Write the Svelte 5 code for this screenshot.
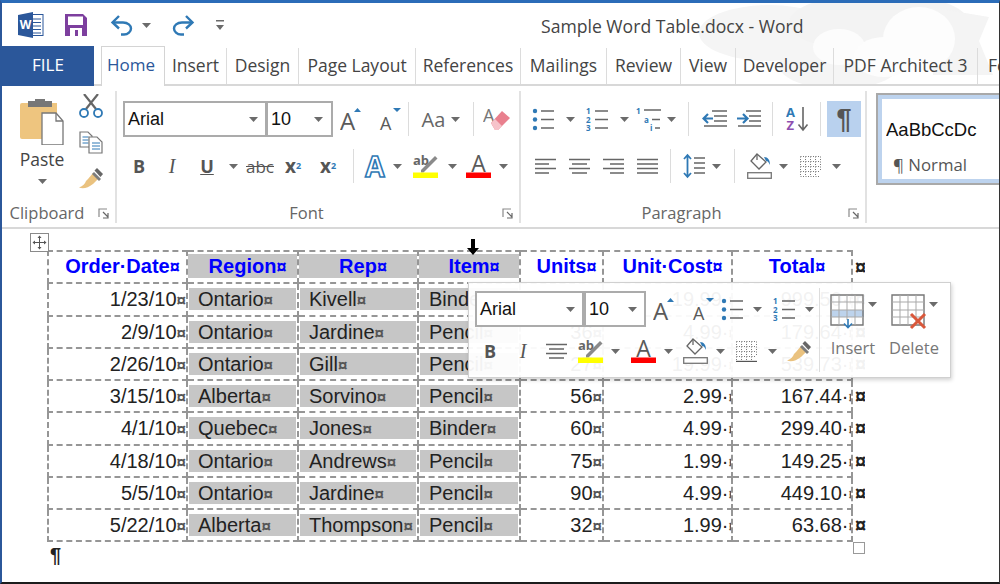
<script>
	const tabs = [
		{ name: 'Home', w: 64, active: true },
		{ name: 'Insert', w: 62 },
		{ name: 'Design', w: 72 },
		{ name: 'Page Layout', w: 117 },
		{ name: 'References', w: 105 },
		{ name: 'Mailings', w: 86 },
		{ name: 'Review', w: 74 },
		{ name: 'View', w: 55 },
		{ name: 'Developer', w: 98 },
		{ name: 'PDF Architect 3', w: 144 },
		{ name: 'Fe', w: 40 }
	];

	const headers = ['Order·Date', 'Region', 'Rep', 'Item', 'Units', 'Unit·Cost', 'Total'];

	const rows = [
		['1/23/10', 'Ontario', 'Kivell', 'Binder', '50', '19.99', '999.50'],
		['2/9/10', 'Ontario', 'Jardine', 'Pencil', '36', '4.99', '179.64'],
		['2/26/10', 'Ontario', 'Gill', 'Pencil', '27', '19.99', '539.73'],
		['3/15/10', 'Alberta', 'Sorvino', 'Pencil', '56', '2.99', '167.44'],
		['4/1/10', 'Quebec', 'Jones', 'Binder', '60', '4.99', '299.40'],
		['4/18/10', 'Ontario', 'Andrews', 'Pencil', '75', '1.99', '149.25'],
		['5/5/10', 'Ontario', 'Jardine', 'Pencil', '90', '4.99', '449.10'],
		['5/22/10', 'Alberta', 'Thompson', 'Pencil', '32', '1.99', '63.68']
	];
</script>

{#snippet caret()}
	<svg width="9" height="5" viewBox="0 0 9 5"><path d="M0 0h9L4.5 5z" fill="#6b6b6b" /></svg>
{/snippet}

{#snippet launcher()}
	<svg width="12" height="11" viewBox="0 0 12 11" fill="none">
		<path d="M1 9V1h8" stroke="#8a8a8a" stroke-width="1.2" />
		<path d="M5 4l5 5M10 5v5H5" stroke="#666" stroke-width="1.2" />
	</svg>
{/snippet}

{#snippet growA()}
	<svg width="24" height="26" viewBox="0 0 24 26">
		<text x="0" y="24" class="svgt" font-size="24" fill="#5a5a5a">A</text>
		<path d="M14 6l3.5-4 3.500 4z" fill="#2f79b5" />
	</svg>
{/snippet}

{#snippet shrinkA()}
	<svg width="24" height="26" viewBox="0 0 24 26">
		<text x="2" y="24" class="svgt" font-size="18" fill="#5a5a5a">A</text>
		<path d="M15 2h8l-4 4z" fill="#2f79b5" />
	</svg>
{/snippet}

{#snippet bullets()}
	<svg width="23" height="23" viewBox="0 0 23 23" fill="none">
		<circle cx="3" cy="3" r="2.200" fill="#2f79b5" />
		<circle cx="3" cy="11.500" r="2.200" fill="#2f79b5" />
		<circle cx="3" cy="20" r="2.200" fill="#2f79b5" />
		<path d="M9 3h13M9 11.500h13M9 20h13" stroke="#666" stroke-width="1.600" />
	</svg>
{/snippet}

{#snippet numbering()}
	<svg width="23" height="25" viewBox="0 0 23 25" fill="none">
		<text x="0" y="7" class="svgt" font-size="8" font-weight="700" fill="#2f79b5">1</text>
		<text x="0" y="15.500" class="svgt" font-size="8" font-weight="700" fill="#2f79b5">2</text>
		<text x="0" y="24" class="svgt" font-size="8" font-weight="700" fill="#2f79b5">3</text>
		<path d="M9 4h13M9 12.500h13M9 21h13" stroke="#666" stroke-width="1.600" />
	</svg>
{/snippet}

{#snippet multilevel()}
	<svg width="27" height="25" viewBox="0 0 27 25" fill="none">
		<text x="0" y="7" class="svgt" font-size="8" font-weight="700" fill="#2f79b5">1</text>
		<text x="8" y="15.500" class="svgt" font-size="8" font-weight="700" fill="#2f79b5">a</text>
		<text x="14" y="24" class="svgt" font-size="8" font-weight="700" fill="#2f79b5">i</text>
		<path d="M8 3h17M16 12.500h8M19 21h5" stroke="#666" stroke-width="1.600" />
	</svg>
{/snippet}

{#snippet outdent()}
	<svg width="26" height="20" viewBox="0 0 26 20" fill="none">
		<path d="M10 2h15M12 7h13M12 12h13M2 17h23" stroke="#666" stroke-width="1.600" />
		<path d="M11 9.500H2M6 5L1.500 9.500 6 14" stroke="#2f79b5" stroke-width="2.200" />
	</svg>
{/snippet}

{#snippet indent()}
	<svg width="26" height="20" viewBox="0 0 26 20" fill="none">
		<path d="M10 2h15M13 7h12M13 12h12M2 17h23" stroke="#666" stroke-width="1.600" />
		<path d="M1 9.500h10M7 5l4.500 4.500L7 14" stroke="#2f79b5" stroke-width="2.200" />
	</svg>
{/snippet}

{#snippet sort()}
	<svg width="23" height="26" viewBox="0 0 23 26" fill="none">
		<text x="0" y="11" class="svgt" font-size="13" font-weight="700" fill="#2f79b5">A</text>
		<text x="0.500" y="24" class="svgt" font-size="13" font-weight="700" fill="#8e4fb0">Z</text>
		<path d="M17 1v22M12.500 18.500L17 24l4.500-5.500" stroke="#666" stroke-width="1.600" />
	</svg>
{/snippet}

{#snippet alignLines(kind)}
	<svg width="23" height="17" viewBox="0 0 23 17" fill="none">
		{#if kind === 'left'}
			<path d="M1 1.500h21M1 6h14M1 10.500h21M1 15h14" stroke="#666" stroke-width="1.600" />
		{:else if kind === 'center'}
			<path d="M1 1.500h21M4 6h15M1 10.500h21M4 15h15" stroke="#666" stroke-width="1.600" />
		{:else if kind === 'right'}
			<path d="M1 1.500h21M8 6h14M1 10.500h21M8 15h14" stroke="#666" stroke-width="1.600" />
		{:else}
			<path d="M1 1.500h21M1 6h21M1 10.500h21M1 15h21" stroke="#666" stroke-width="1.600" />
		{/if}
	</svg>
{/snippet}

{#snippet lineSpacing()}
	<svg width="23" height="26" viewBox="0 0 23 26" fill="none">
		<path d="M4.500 2v22M1 6l3.500-4L8 6M1 20l3.500 4L8 20" stroke="#2f79b5" stroke-width="1.800" />
		<path d="M11 5h11M11 10h11M11 15h11M11 20h11" stroke="#666" stroke-width="1.600" />
	</svg>
{/snippet}

{#snippet shading()}
	<svg width="25" height="26" viewBox="0 0 25 26" fill="none">
		<path d="M10 1l9 8-7 7-8-8z" fill="#fff" stroke="#666" stroke-width="1.300" />
		<path d="M10 1v6" stroke="#666" stroke-width="1.300" />
		<path d="M17 4c4 0 6 3 6 8-1-2-2-4-4-4z" fill="#2f79b5" />
		<rect x="0.700" y="19.700" width="23.600" height="5.600" fill="#fff" stroke="#777" stroke-width="1.300" />
	</svg>
{/snippet}

{#snippet borders(solid)}
	<svg width="21" height="21" viewBox="0 0 21 21" fill="none">
		<path d="M.5.5h20M.5 5.500h20M.5 10.500h20M.5 15.500h20M.5.5v20M5.500.5v20M10.500.5v20M15.500.5v20M20.500.5v15" stroke="#777" stroke-dasharray="1 1.500" />
		{#if solid}
			<path d="M0 20.500h21" stroke="#555" stroke-width="1.400" />
		{:else}
			<path d="M.5 20.500h20" stroke="#777" stroke-dasharray="1 1.500" />
		{/if}
	</svg>
{/snippet}

{#snippet painter()}
	<svg width="25" height="23" viewBox="0 0 25 23">
		<path d="M14 6l5 6-5 5C9 21 4 22 0 20.500 4 19 6 17 7 14l2-2z" fill="#eac27f" />
		<path d="M15.500 3.500l6 6.500 2.500-3-6-6z" fill="#666" />
		<path d="M13 7l7 7 2-2-7-7z" fill="#7d7d7d" />
	</svg>
{/snippet}

{#snippet highlight()}
	<svg width="25" height="24" viewBox="0 0 25 24" fill="none">
		<text x="0" y="11" class="svgt" font-size="13" font-weight="700" fill="#666">ab</text>
		<path d="M8 16L22 2l2.500 2.500-14 14H8z" fill="#8a8a8a" />
		<rect x="0" y="18.500" width="25" height="5.500" fill="#ffff00" />
	</svg>
{/snippet}

{#snippet fontColor()}
	<svg width="25" height="24" viewBox="0 0 25 24">
		<text x="12.500" y="18" class="svgt" text-anchor="middle" font-size="23" fill="#5a5a5a">A</text>
		<rect x="0" y="18.500" width="25" height="5.500" fill="#ff0000" />
	</svg>
{/snippet}

{#snippet tableIcon(kind)}
	<svg width="36" height="36" viewBox="0 0 36 36" fill="none">
		{#if kind === 'insert'}
			<rect x="2" y="16" width="32" height="7" fill="#bdd3ec" />
		{/if}
		<path d="M1 1h32v30H1z" stroke="#777" stroke-width="1.400" />
		<path d="M1 8h32M1 16h32M1 23h32M9 1v30M17 1v30M25 1v30" stroke="#a9a9a9" />
		{#if kind === 'insert'}
			<path d="M15 26h6v9h-6z" fill="#fff" />
			<path d="M18 25v8M14 29.500l4 4 4-4" stroke="#2f79b5" stroke-width="1.600" />
		{:else}
			<path d="M20 20l14 14M34 20L20 34" stroke="#d9583b" stroke-width="3" />
		{/if}
	</svg>
{/snippet}

<div class="window">
	<!-- title bar backdrop, the faint clouds on the right -->
	<svg class="clouds" width="320" height="82" viewBox="0 0 320 82">
		<ellipse cx="90" cy="30" rx="70" ry="28" fill="#f5f5f5" />
		<ellipse cx="200" cy="20" rx="90" ry="30" fill="#f3f3f3" />
		<ellipse cx="160" cy="62" rx="60" ry="24" fill="#f5f5f5" />
		<path d="M250 4l60 10-10 24 14 34h-60z" fill="#f4f4f4" />
		<ellipse cx="160" cy="44" rx="26" ry="18" fill="#fcfcfc" />
		<ellipse cx="240" cy="36" rx="36" ry="32" fill="#fdfdfd" />
		<ellipse cx="205" cy="54" rx="30" ry="20" fill="#fdfdfd" />
	</svg>

	<header class="titlebar">
		<div class="qat">
			<svg class="word" width="26" height="26" viewBox="0 0 26 26">
				<rect x="10" y="2.500" width="15" height="21" fill="#fff" stroke="#2b579a" />
				<path d="M15 7h8M15 10.500h8M15 14h8M15 17.500h8M15 21h8" stroke="#2b579a" stroke-width="1.200" />
				<path d="M0 3l15-3v26L0 23z" fill="#2b579a" />
				<text x="7.500" y="17" class="svgt" text-anchor="middle" font-size="12" font-weight="700" fill="#fff">W</text>
			</svg>
			<svg class="save" width="22" height="22" viewBox="0 0 22 22">
				<path d="M0 0h18l4 4v18H0z" fill="#7d3f9e" />
				<rect x="3" y="2.500" width="15" height="8.500" fill="#fff" />
				<rect x="5" y="14" width="12" height="8" fill="#fff" />
				<rect x="10" y="16" width="3" height="6" fill="#7d3f9e" />
			</svg>
			<svg class="undo" width="23" height="21" viewBox="0 0 23 21" fill="none">
				<path d="M9 1L2.500 7.500 9 13.500" stroke="#2f79b5" stroke-width="2.400" />
				<path d="M3 7.500h10c5 0 8 3 8 6s-3 6-7 6h-3" stroke="#2f79b5" stroke-width="2.400" />
			</svg>
			<span class="qat-caret">{@render caret()}</span>
			<svg class="redo" width="23" height="21" viewBox="0 0 23 21" fill="none">
				<path d="M14 1l6.500 6.500L14 13.500" stroke="#2f79b5" stroke-width="2.400" />
				<path d="M20 7.500H10c-5 0-8 3-8 6s3 6 7 6h3" stroke="#2f79b5" stroke-width="2.400" />
			</svg>
			<svg class="custom" width="8" height="10" viewBox="0 0 8 10">
				<path d="M0 0h8v1.500H0zM0 5h8L4 10z" fill="#6b6b6b" />
			</svg>
		</div>
		<div class="doc-title">Sample Word Table.docx - Word</div>
	</header>

	<nav class="tabs">
		<div class="file">FILE</div>
		{#each tabs as tab}
			<div class="tab" class:active={tab.active} style="width: {tab.w}px">{tab.name}</div>
		{/each}
	</nav>

	<section class="ribbon">
		<div class="group clipboard">
			<div class="clip-body">
				<div class="paste">
					<svg width="44" height="46" viewBox="0 0 44 46">
						<path d="M2 4h35v36H2a2 2 0 0 1-2-2V6a2 2 0 0 1 2-2z" fill="#eec57f" />
						<path d="M8 2h24v6H8z" fill="#777" />
						<path d="M15 0h10v4H15z" fill="#777" />
						<path d="M22 14h14l7 8v24H22z" fill="#fff" stroke="#777" stroke-width="1.300" />
						<path d="M36 14v8h7" fill="none" stroke="#777" stroke-width="1.300" />
					</svg>
					<span class="paste-label">Paste</span>
					{@render caret()}
				</div>
				<div class="clip-tools">
					<svg width="24" height="24" viewBox="0 0 24 24" fill="none">
						<path d="M5 0l12 15M19 0L7 15" stroke="#666" stroke-width="2.200" />
						<circle cx="5" cy="19" r="4" stroke="#2f79b5" stroke-width="1.800" />
						<circle cx="19" cy="19" r="4" stroke="#2f79b5" stroke-width="1.800" />
					</svg>
					<svg width="24" height="23" viewBox="0 0 24 23" fill="none">
						<path d="M1 1h8l4 4v11H1z" fill="#fff" stroke="#777" stroke-width="1.200" />
						<path d="M3.500 6h6M3.500 9h6M3.500 12h6" stroke="#2f79b5" />
						<path d="M10 6h8l5 5v11H10z" fill="#fff" stroke="#777" stroke-width="1.200" />
						<path d="M13 12h8M13 15h8M13 18h8" stroke="#2f79b5" />
					</svg>
					{@render painter()}
				</div>
			</div>
			<div class="group-label"><span>Clipboard</span>{@render launcher()}</div>
		</div>

		<div class="group font">
			<div class="grid font-r1">
				<div class="combo name"><span>Arial</span>{@render caret()}</div>
				<div class="combo size"><span>10</span>{@render caret()}</div>
				<div class="cell">{@render growA()}</div>
				<div class="cell">{@render shrinkA()}</div>
				<div class="sep"></div>
				<div class="cell aa"><span>Aa</span>{@render caret()}</div>
				<div class="sep"></div>
				<div class="cell">
					<svg width="28" height="28" viewBox="0 0 28 28">
						<text x="0" y="17" class="svgt" font-size="18" fill="#777">A</text>
						<path d="M8 18L19 6l8 7-12 12h-3z" fill="#e9808e" />
						<path d="M8 18l4-4 7 7-4 4h-3z" fill="#f6c3ca" />
					</svg>
				</div>
			</div>
			<div class="grid font-r2">
				<div class="cell fmt bold">B</div>
				<div class="cell fmt ital">I</div>
				<div class="cell fmt under">U</div>
				<div class="cell">{@render caret()}</div>
				<div class="cell fmt strike">abc</div>
				<div class="cell fmt script">x<sub>2</sub></div>
				<div class="cell fmt script">x<sup>2</sup></div>
				<div class="sep"></div>
				<div class="cell">
					<svg width="24" height="27" viewBox="0 0 24 27">
						<text x="12" y="24" class="svgt effect" text-anchor="middle" font-size="28">A</text>
					</svg>
				</div>
				<div class="cell">{@render caret()}</div>
				<div class="cell">{@render highlight()}</div>
				<div class="cell">{@render caret()}</div>
				<div class="cell">{@render fontColor()}</div>
				<div class="cell">{@render caret()}</div>
			</div>
			<div class="group-label"><span>Font</span>{@render launcher()}</div>
		</div>

		<div class="group para">
			<div class="grid para-r1">
				<div class="cell">{@render bullets()}</div>
				<div class="cell">{@render caret()}</div>
				<div class="cell">{@render numbering()}</div>
				<div class="cell">{@render caret()}</div>
				<div class="cell">{@render multilevel()}</div>
				<div class="cell">{@render caret()}</div>
				<div class="cell"><div class="sep"></div></div>
				<div class="cell">{@render outdent()}</div>
				<div class="cell">{@render indent()}</div>
				<div class="cell"><div class="sep"></div></div>
				<div class="cell">{@render sort()}</div>
				<div class="sep"></div>
				<div class="cell"><div class="pilcrow">¶</div></div>
			</div>
			<div class="grid para-r2">
				<div class="cell">{@render alignLines('left')}</div>
				<div class="cell">{@render alignLines('center')}</div>
				<div class="cell">{@render alignLines('right')}</div>
				<div class="cell">{@render alignLines('justify')}</div>
				<div class="cell"><div class="sep"></div></div>
				<div class="cell">{@render lineSpacing()}</div>
				<div class="cell">{@render caret()}</div>
				<div class="cell"><div class="sep"></div></div>
				<div class="cell">{@render shading()}</div>
				<div class="cell">{@render caret()}</div>
				<div class="cell">{@render borders(false)}</div>
				<div class="cell">{@render caret()}</div>
			</div>
			<div class="group-label"><span>Paragraph</span>{@render launcher()}</div>
		</div>

		<div class="styles">
			<div class="style-card">
				<div class="style-sample">AaBbCcDc</div>
				<div class="style-name">¶ Normal</div>
			</div>
		</div>
	</section>

	<main class="doc">
		<table>
			<colgroup>
				<col style="width: 139px" />
				<col style="width: 111px" />
				<col style="width: 120px" />
				<col style="width: 102px" />
				<col style="width: 83px" />
				<col style="width: 129px" />
				<col style="width: 120px" />
				<col style="width: 14px" />
			</colgroup>
			<thead>
				<tr>
					{#each headers as h, i}
						<th class:shaded={i >= 1 && i <= 3}><div class="in">{h}<span class="mark">¤</span></div></th>
					{/each}
					<td class="end">¤</td>
				</tr>
			</thead>
			<tbody>
				{#each rows as row}
					<tr>
						{#each row as v, i}
							<td
								class:shaded={i >= 1 && i <= 3}
								class:num={i === 0 || i === 4}
								class:money={i === 5 || i === 6}
							>
								<div class="in">{v}{#if i === 5 || i === 6}·{/if}<span class="mark">¤</span></div>
							</td>
						{/each}
						<td class="end">¤</td>
					</tr>
				{/each}
			</tbody>
		</table>
		<p class="para-mark">¶</p>

		<div class="move-handle">
			<svg width="15" height="15" viewBox="0 0 15 15" fill="none">
				<path d="M7.500 1v13M1 7.500h13" stroke="#555" />
				<path d="M5.500 3l2-2.500 2 2.500zM5.500 12l2 2.500 2-2.500zM3 5.500L.5 7.500 3 9.500zM12 5.500l2.500 2-2.500 2z" fill="#555" />
			</svg>
		</div>
		<svg class="col-arrow" width="12" height="16" viewBox="0 0 12 16">
			<path d="M4 0h4v9h4l-6 7-6-7h4z" fill="#000" />
		</svg>
		<div class="resize-handle"></div>

		<div class="mini">
			<div class="mini-left">
				<div class="grid mini-r1">
					<div class="combo mname"><span>Arial</span>{@render caret()}</div>
					<div class="combo msize"><span>10</span>{@render caret()}</div>
					<div class="cell">{@render growA()}</div>
					<div class="cell">{@render shrinkA()}</div>
					<div class="cell">{@render bullets()}</div>
					<div class="cell">{@render caret()}</div>
					<div class="cell">{@render numbering()}</div>
					<div class="cell">{@render caret()}</div>
				</div>
				<div class="grid mini-r2">
					<div class="cell fmt bold">B</div>
					<div class="cell fmt ital">I</div>
					<div class="cell">{@render alignLines('center')}</div>
					<div class="cell">{@render highlight()}</div>
					<div class="cell">{@render caret()}</div>
					<div class="cell">{@render fontColor()}</div>
					<div class="cell">{@render caret()}</div>
					<div class="cell">{@render shading()}</div>
					<div class="cell">{@render caret()}</div>
					<div class="cell">{@render borders(true)}</div>
					<div class="cell">{@render caret()}</div>
					<div class="cell">{@render painter()}</div>
				</div>
			</div>
			<div class="mini-sep"></div>
			<div class="mini-btn">
				<div class="mini-icon">{@render tableIcon('insert')}{@render caret()}</div>
				<span>Insert</span>
			</div>
			<div class="mini-btn">
				<div class="mini-icon">{@render tableIcon('delete')}{@render caret()}</div>
				<span>Delete</span>
			</div>
		</div>
	</main>
</div>

<style>
	:global(body) {
		margin: 0;
		background: #fff;
	}

	svg {
		flex-shrink: 0;
	}

	.window {
		position: relative;
		box-sizing: border-box;
		width: 1000px;
		height: 584px;
		display: flex;
		flex-direction: column;
		overflow: hidden;
		background: #fff;
		border-top: 3px solid #2b6cb8;
		border-left: 2px solid #2b579a;
		border-right: 1px solid #333;
		border-bottom: 2px solid #1c1c1c;
		font-family: 'Open Sans', 'Noto Sans', sans-serif;
		color: #444;
	}

	.svgt {
		font-family: 'Open Sans', 'Liberation Sans', sans-serif;
	}

	.clouds {
		position: absolute;
		right: 0;
		top: 0;
	}

	/* title bar */
	.titlebar {
		position: relative;
		height: 43px;
		flex-shrink: 0;
		display: flex;
		align-items: center;
	}
	.qat {
		display: flex;
		align-items: center;
		padding-left: 16px;
		padding-top: 1px;
	}
	.save { margin-left: 21px; }
	.undo { margin-left: 23px; }
	.qat-caret { margin-left: 9px; display: flex; }
	.redo { margin-left: 21px; }
	.custom { margin-left: 21px; }
	.doc-title {
		position: absolute;
		left: 539px;
		top: 12px;
		font-size: 17.600px;
		line-height: 22px;
		white-space: nowrap;
		color: #444;
	}

	/* tabs */
	.tabs {
		position: relative;
		height: 38px;
		flex-shrink: 0;
		display: flex;
		border-bottom: 2px solid #d8d8d8;
		box-sizing: content-box;
	}
	.file {
		width: 92px;
		flex-shrink: 0;
		background: #2b579a;
		color: #fff;
		font-size: 17px;
		display: flex;
		align-items: center;
		justify-content: center;
		margin-right: 7px;
		margin-bottom: -2px;
		padding-bottom: 4px;
		box-sizing: border-box;
	}
	.tab {
		box-sizing: border-box;
		display: flex;
		align-items: center;
		justify-content: center;
		font-size: 17.500px;
		white-space: nowrap;
		color: #444;
		border-right: 1px solid #dcdcdc;
		margin-top: 2px;
		padding-bottom: 2px;
		flex-shrink: 0;
	}
	.tab.active {
		color: #2b579a;
		background: #fff;
		border: 1px solid #d4d4d4;
		border-bottom: none;
		margin-bottom: -2px;
		margin-top: 0;
		padding-bottom: 4px;
		padding-right: 4px;
		font-size: 17px;
	}

	/* ribbon */
	.ribbon {
		height: 141px;
		flex-shrink: 0;
		display: flex;
		border-bottom: 2px solid #d8d8d8;
		background: #fff;
		overflow: hidden;
	}
	.group {
		position: relative;
		display: flex;
		flex-direction: column;
		margin-top: 5px;
		margin-bottom: 4px;
		border-right: 2px solid #e2e2e2;
		box-sizing: border-box;
		flex-shrink: 0;
	}
	.clipboard { width: 115px; }
	.font { width: 404px; padding-top: 10px; }
	.para { width: 346px; padding-top: 10px; }

	.group-label {
		margin-top: auto;
		display: flex;
		align-items: center;
		font-size: 16.500px;
		line-height: 20px;
		color: #666;
		padding: 0 5px 0 2px;
	}
	.group-label span {
		flex: 1;
		text-align: center;
		margin-right: 8px;
	}

	.clip-body {
		flex: 1;
		display: flex;
	}
	.paste {
		width: 80px;
		display: flex;
		flex-direction: column;
		align-items: center;
		padding-top: 8px;
		color: #444;
	}
	.paste-label {
		font-size: 17.500px;
		line-height: 22px;
		margin-top: 3px;
		margin-bottom: 9px;
	}
	.clip-tools {
		display: flex;
		flex-direction: column;
		align-items: center;
		gap: 13px;
		padding-top: 3px;
		width: 26px;
		margin-left: -4px;
	}

	.grid {
		display: grid;
		align-items: center;
	}
	.cell {
		display: flex;
		align-items: center;
		justify-content: center;
		height: 100%;
	}
	.sep {
		width: 1px;
		height: 34px;
		background: #dcdcdc;
		justify-self: center;
	}

	.font-r1 {
		height: 36px;
		padding-left: 6px;
		grid-template-columns: 144px 66px 38px 37px 1px 64px 1px 46px;
	}
	.font-r2 {
		height: 36px;
		margin-top: 11px;
		padding-left: 6px;
		grid-template-columns: 32px 34px 36px 16px 38px 28px 42px 8px 36px 8px 48px 6px 46px 4px;
	}

	.para-r1 {
		height: 36px;
		grid-template-columns: 44px 10px 44px 11px 38px 6px 28px 26px 42px 4px 46px 1px 46px;
	}
	.para-r2 {
		height: 36px;
		margin-top: 11px;
		padding-left: 7px;
		grid-template-columns: 34px 34px 34px 34px 12px 36px 8px 28px 22px 26px 28px 24px;
	}
	.pilcrow {
		width: 34px;
		height: 36px;
		background: #b9d1ee;
		display: flex;
		align-items: center;
		justify-content: center;
		font-size: 27px;
		font-weight: 700;
		color: #555;
		font-family: 'Liberation Sans', sans-serif;
	}

	.combo {
		box-sizing: border-box;
		height: 36px;
		border: 2px solid #ababab;
		display: flex;
		align-items: center;
		justify-content: space-between;
		padding: 0 7px 0 3px;
		font-family: 'Liberation Sans', sans-serif;
		font-size: 18px;
		color: #111;
		background: #fff;
	}
	.combo.size { margin-left: -1px; padding-right: 8px; }

	.aa {
		font-size: 20px;
		color: #666;
		gap: 6px;
	}

	.fmt {
		color: #555;
		font-size: 18px;
	}
	.bold { font-weight: 700; font-family: 'Open Sans', sans-serif; }
	.ital { font-style: italic; font-family: 'Liberation Serif', serif; font-size: 20px; }
	.under { text-decoration: underline; font-weight: 700; }
	.strike { text-decoration: line-through; font-size: 17px; }
	.script { font-weight: 700; font-size: 19px; }
	.script sub,
	.script sup {
		font-size: 9px;
		color: #2f79b5;
		line-height: 0;
	}
	.effect {
		fill: #fff;
		stroke: #2f79b5;
		stroke-width: 1.600;
		font-weight: 700;
	}

	.styles {
		padding: 7px 0 0 9px;
		flex: 1;
	}
	.style-card {
		box-sizing: border-box;
		width: 130px;
		height: 92px;
		border: 2px solid #a9a9a9;
		border-right: none;
		background: #fff;
		box-shadow: inset 0 0 0 4px #bdd3ee;
		padding: 6px;
		display: flex;
		flex-direction: column;
		align-items: flex-start;
		overflow: hidden;
		position: relative;
	}
	.style-sample {
		font-family: 'Liberation Sans', sans-serif;
		font-size: 18.500px;
		color: #111;
		width: 92px;
		overflow: hidden;
		white-space: nowrap;
		margin: 19px 0 0 2px;
		line-height: 20px;
	}
	.style-name {
		font-size: 16.800px;
		color: #555;
		line-height: 22px;
		margin: 14px 0 0 9px;
	}

	/* document */
	.doc {
		position: relative;
		flex: 1;
		background: #fff;
		padding: 21px 0 0 45px;
		font-family: 'Liberation Sans', Arial, sans-serif;
		color: #222;
		min-height: 0;
	}
	table {
		table-layout: fixed;
		width: 818px;
		border-collapse: collapse;
	}
	th,
	td {
		box-sizing: border-box;
		padding: 0;
		height: 32.250px;
		border: 2px dashed #969696;
		font-size: 20px;
		line-height: 22px;
		white-space: nowrap;
		overflow: hidden;
	}
	th {
		color: #0000ff;
		font-weight: 700;
		text-align: center;
	}
	th .in {
		padding-left: 10px;
		height: 24px;
		line-height: 24px;
		margin-bottom: 2px;
	}
	th.shaded .in { background: #c6c6c6; }
	td .in {
		padding-left: 10px;
		height: 22px;
	}
	td.shaded .in {
		background: #c6c6c6;
		margin: 0 1px;
		padding-left: 9px;
	}
	td.num .in,
	td.money .in {
		padding: 0;
		text-align: right;
	}
	td.money .in {
		margin-right: -7px;
	}
	.mark {
		font-size: 17px;
		font-weight: 700;
		color: #555;
		line-height: 1;
	}
	th .mark { color: #0000ff; font-size: 18px; }
	td.end {
		border: none;
		font-size: 20px;
		font-weight: 700;
		color: #222;
		padding-left: 2px;
	}
	.para-mark {
		margin: 0 0 0 3px;
		font-size: 20px;
		line-height: 26px;
		font-weight: 700;
		color: #222;
	}

	.move-handle {
		position: absolute;
		left: 28px;
		top: 4px;
		box-sizing: border-box;
		width: 19px;
		height: 19px;
		border: 1px solid #8a8a8a;
		display: flex;
		align-items: center;
		justify-content: center;
		background: #fff;
	}
	.col-arrow {
		position: absolute;
		left: 465px;
		top: 10px;
	}
	.resize-handle {
		position: absolute;
		left: 851px;
		top: 313px;
		box-sizing: border-box;
		width: 12px;
		height: 12px;
		border: 1px solid #999;
		background: #fff;
	}

	/* floating mini toolbar */
	.mini {
		position: absolute;
		left: 466px;
		top: 53px;
		box-sizing: border-box;
		width: 483px;
		height: 96px;
		background: rgba(255, 255, 255, 0.94);
		border: 1px solid #d0d0d0;
		box-shadow: 1px 2px 4px rgba(0, 0, 0, 0.18);
		display: flex;
		font-family: 'Open Sans', sans-serif;
		color: #555;
	}
	.mini-left {
		width: 350px;
		padding: 8px 0 0 6px;
		box-sizing: border-box;
		flex-shrink: 0;
	}
	.mini-r1 {
		height: 36px;
		grid-template-columns: 109px 62px 38px 38px 20px 30px 24px 26px;
	}
	.mini-r2 {
		height: 36px;
		margin-top: 6px;
		grid-template-columns: 30px 36px 30px 38px 12px 44px 6px 48px 2px 50px 2px 52px;
	}
	.mini-sep {
		width: 1px;
		height: 84px;
		margin-top: 5px;
		background: #dcdcdc;
		flex-shrink: 0;
	}
	.mini-btn {
		width: 66px;
		display: flex;
		flex-direction: column;
		align-items: center;
		padding-top: 11px;
		font-size: 16.500px;
		color: #777;
		gap: 8px;
		box-sizing: border-box;
		line-height: 20px;
	}
	.mini-btn + .mini-btn { margin-left: -5px; }
	.mini-icon {
		display: flex;
		align-items: flex-start;
		gap: 2px;
		height: 36px;
	}
	.mini-icon svg:last-child { margin-top: 8px; }
</style>
